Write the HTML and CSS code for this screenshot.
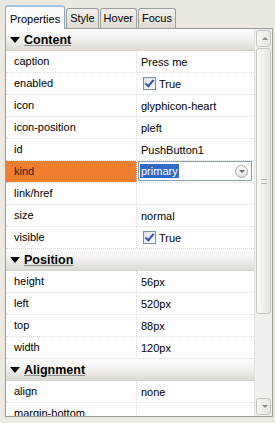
FILE: index.html
```html
<!DOCTYPE html>
<html lang="en">
<head>
  <meta charset="UTF-8">
  <title>Properties</title>
  <link rel="stylesheet" href="styles.css">
</head>
<body>
  <div class="tabs">
    <div class="tab active">Properties</div>
    <div class="tab">Style</div>
    <div class="tab">Hover</div>
    <div class="tab">Focus</div>
  </div>

  <div class="panel">
    <div class="grid">
      <div class="group"><span class="arrow"></span><span class="group-name">Content</span></div>
      <div class="row"><div class="name">caption</div><div class="value">Press me</div></div>
      <div class="row"><div class="name">enabled</div><div class="value"><span class="check"></span>True</div></div>
      <div class="row"><div class="name">icon</div><div class="value">glyphicon-heart</div></div>
      <div class="row"><div class="name">icon-position</div><div class="value">pleft</div></div>
      <div class="row"><div class="name">id</div><div class="value">PushButton1</div></div>
      <div class="row selected">
        <div class="name">kind</div>
        <div class="value editing">
          <div class="select"><span class="sel-text">primary</span><span class="drop"></span></div>
        </div>
      </div>
      <div class="row"><div class="name">link/href</div><div class="value"></div></div>
      <div class="row"><div class="name">size</div><div class="value">normal</div></div>
      <div class="row"><div class="name">visible</div><div class="value"><span class="check"></span>True</div></div>

      <div class="group"><span class="arrow"></span><span class="group-name">Position</span></div>
      <div class="row"><div class="name">height</div><div class="value">56px</div></div>
      <div class="row"><div class="name">left</div><div class="value">520px</div></div>
      <div class="row"><div class="name">top</div><div class="value">88px</div></div>
      <div class="row"><div class="name">width</div><div class="value">120px</div></div>

      <div class="group"><span class="arrow"></span><span class="group-name">Alignment</span></div>
      <div class="row"><div class="name">align</div><div class="value">none</div></div>
      <div class="row"><div class="name">margin-bottom</div><div class="value"></div></div>
    </div>

    <div class="scrollbar">
      <div class="sb-btn"><span class="up"></span></div>
      <div class="thumb"><span class="grip"></span></div>
      <div class="track"></div>
      <div class="sb-btn"><span class="down"></span></div>
    </div>
  </div>
</body>
</html>
```

FILE: styles.css
```css
body {
  margin: 0;
  padding: 4px 2px 0 5px;
  background-color: #ece9e3;
  font-family: "Liberation Sans", Arial, sans-serif;
  font-size: 11px;
  color: #000;
  height: 423px;
  box-sizing: border-box;
  overflow: hidden;
}
.tabs {
  display: flex;
  align-items: flex-end;
  height: 24px;
  position: relative;
  z-index: 1;
}
.tab {
  height: 19px;
  line-height: 19px;
  padding: 0 3px;
  margin-right: 1px;
  font-size: 11px;
  border: 1px solid #9c9c9c;
  border-bottom: none;
  border-radius: 3px 3px 0 0;
  background: linear-gradient(#f2f1ed, #dedbd4);
}
.tab.active {
  line-height: 25px;
  padding: 0 4px;
  background: #fbfbfa;
  border-color: #91a7b4;
  border-top: 2px solid #a8c4dc;
  height: 22px;
  margin-bottom: -1px;
}
.panel {
  display: flex;
  height: 389px;
  border: 1px solid #9c9c9c;
  background: #fff;
  box-sizing: border-box;
}
.grid {
  flex: 1;
  overflow: hidden;
}
.row, .group {
  display: flex;
  height: 22px;
  box-sizing: border-box;
  border-bottom: 1px dotted #dcdcdc;
}
.name {
  width: 131px;
  padding-left: 8px;
  line-height: 21px;
  border-right: 1px dotted #dcdcdc;
  box-sizing: border-box;
  white-space: nowrap;
}
.value {
  flex: 1;
  display: flex;
  align-items: center;
  padding-left: 4px;
  white-space: nowrap;
}
.group {
  align-items: center;
  border-bottom: 1px solid #d6d3cc;
  background: linear-gradient(#fefefe, #f3f2ef 45%, #dddad4);
  font-weight: bold;
  font-size: 12.5px;
}
.arrow {
  width: 0;
  height: 0;
  border-left: 5px solid transparent;
  border-right: 5px solid transparent;
  border-top: 6px solid #000;
  margin: 0 4px 0 4px;
}
.group-name {
  text-decoration: underline;
  text-decoration-color: #8e8e8e;
}
.selected .name {
  background: #ef7f2f;
  color: #222;
}
.editing {
  padding: 0 2px 0 1px;
  align-items: stretch;
}
.select {
  flex: 1;
  display: flex;
  align-items: center;
  border: 1px solid #8d9eb2;
  background: #fff;
  margin: 0 0 1px;
}
.sel-text {
  background: #316ac5;
  color: #fff;
  padding: 0 1px;
  line-height: 14px;
  margin-left: 1px;
}
.drop {
  margin-left: auto;
  margin-right: 3px;
  width: 11px;
  height: 11px;
  border: 1px solid #a6a6a6;
  border-radius: 50%;
  background: linear-gradient(#ffffff, #e2e2e2);
  position: relative;
}
.drop::after {
  content: "";
  position: absolute;
  left: 3px;
  top: 4px;
  border-left: 3px solid transparent;
  border-right: 3px solid transparent;
  border-top: 3px solid #6b6b6b;
}
.check {
  width: 11px;
  height: 11px;
  border: 1px solid #7d8ea2;
  background: linear-gradient(135deg, #dfe3ea, #f8f9fb);
  margin: 0 3px 0 2px;
  position: relative;
}
.check::after {
  content: "";
  position: absolute;
  left: 3px;
  top: 0;
  width: 3px;
  height: 7px;
  border: solid #3a55a8;
  border-width: 0 2px 2px 0;
  transform: rotate(40deg);
}
.scrollbar {
  width: 17px;
  display: flex;
  flex-direction: column;
  background: #f1f0ec;
  border-left: 1px solid #e4e2dd;
  padding: 1px 0;
}
.sb-btn {
  height: 15px;
  margin: 0 1px;
  border: 1px solid #c6c4bf;
  border-radius: 3px;
  background: linear-gradient(90deg, #f7f7f5, #e6e4df);
  position: relative;
}
.up::after, .down::after {
  content: "";
  position: absolute;
  left: 5px;
  top: 6px;
  border-left: 3px solid transparent;
  border-right: 3px solid transparent;
}
.up::after {
  border-bottom: 3px solid #8a8a8a;
}
.down::after {
  border-top: 3px solid #8a8a8a;
}
.thumb {
  height: 264px;
  margin: 1px 1px 0;
  border: 1px solid #c6c4bf;
  border-radius: 3px;
  background: linear-gradient(90deg, #f9f9f8, #e8e6e1);
  display: flex;
  align-items: center;
  justify-content: center;
}
.grip {
  width: 6px;
  height: 3px;
  border-top: 1px solid #b6b4ae;
  border-bottom: 1px solid #b6b4ae;
}
.track {
  flex: 1;
}
```
